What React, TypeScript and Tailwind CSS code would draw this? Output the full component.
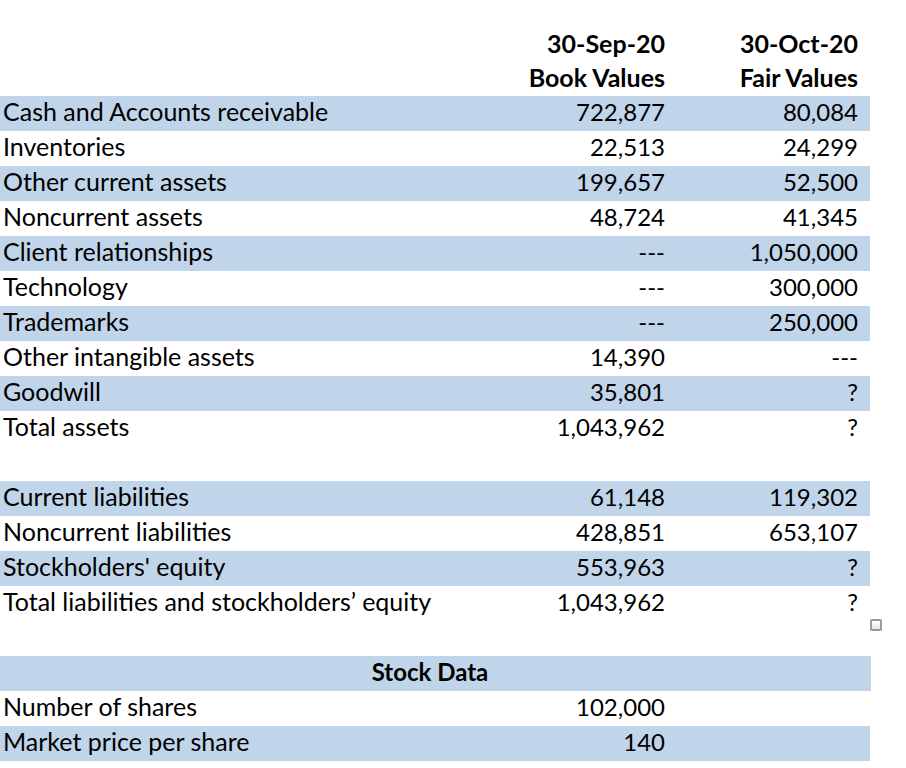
import React from "react";

type Row = {
  label: string;
  book?: string;
  fair?: string;
  shaded?: boolean;
};

const assets: Row[] = [
  { label: "Cash and Accounts receivable", book: "722,877", fair: "80,084", shaded: true },
  { label: "Inventories", book: "22,513", fair: "24,299" },
  { label: "Other current assets", book: "199,657", fair: "52,500", shaded: true },
  { label: "Noncurrent assets", book: "48,724", fair: "41,345" },
  { label: "Client relationships", book: "---", fair: "1,050,000", shaded: true },
  { label: "Technology", book: "---", fair: "300,000" },
  { label: "Trademarks", book: "---", fair: "250,000", shaded: true },
  { label: "Other intangible assets", book: "14,390", fair: "---" },
  { label: "Goodwill", book: "35,801", fair: "?", shaded: true },
  { label: "Total assets", book: "1,043,962", fair: "?" },
];

const liabilities: Row[] = [
  { label: "Current liabilities", book: "61,148", fair: "119,302", shaded: true },
  { label: "Noncurrent liabilities", book: "428,851", fair: "653,107" },
  { label: "Stockholders' equity", book: "553,963", fair: "?", shaded: true },
  { label: "Total liabilities and stockholders\u2019 equity", book: "1,043,962", fair: "?" },
];

const stock: Row[] = [
  { label: "Number of shares", book: "102,000" },
  { label: "Market price per share", book: "140", shaded: true },
];

function SheetRow({ row }: { row: Row }) {
  return (
    <div
      className={`flex h-[35px] w-[870px] items-start leading-[31px] ${
        row.shaded ? "bg-[#c0d4ea]" : ""
      }`}
    >
      <div className="w-[450px] whitespace-nowrap pl-[3px] text-[25px]">{row.label}</div>
      <div className="w-[227px] pr-[12px] text-right">{row.book}</div>
      <div className="w-[193px] pr-[12px] text-right">{row.fair}</div>
    </div>
  );
}

export default function App() {
  return (
    <div className="relative h-[768px] w-[906px] overflow-hidden bg-white pt-[26px] text-[24px] text-black [font-family:Lato,'Open_Sans',sans-serif]">
      <div className="flex h-[35px] w-[870px] items-start text-[25px] font-bold leading-[35px]">
        <div className="w-[450px]" />
        <div className="w-[227px] pr-[12px] text-right">30-Sep-20</div>
        <div className="w-[193px] pr-[12px] text-right">30-Oct-20</div>
      </div>
      <div className="flex h-[35px] w-[870px] items-start text-[25px] font-bold leading-[33px]">
        <div className="w-[450px]" />
        <div className="w-[227px] pr-[12px] text-right">Book Values</div>
        <div className="w-[193px] pr-[12px] text-right">Fair Values</div>
      </div>

      {assets.map((r) => (
        <SheetRow key={r.label} row={r} />
      ))}

      <div className="h-[35px]" />

      {liabilities.map((r) => (
        <SheetRow key={r.label} row={r} />
      ))}

      <div className="h-[35px]" />

      <div className="flex h-[35px] w-[871px] items-start bg-[#c0d4ea] font-bold leading-[32px]">
        <div className="w-[860px] text-center">Stock Data</div>
      </div>

      {stock.map((r) => (
        <SheetRow key={r.label} row={r} />
      ))}

      {/* resize handle */}
      <div className="absolute left-[870px] top-[619px] h-[12px] w-[12px] rounded-[2px] border-2 border-[#9a9a9a] bg-gradient-to-b from-white to-[#e6e6e6]" />
    </div>
  );
}
